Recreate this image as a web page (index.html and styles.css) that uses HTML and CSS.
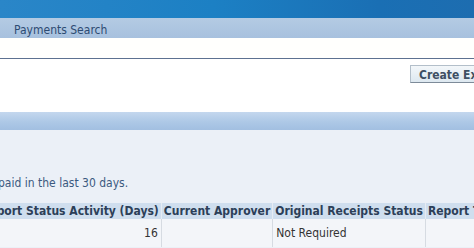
FILE: index.html
```html
<!DOCTYPE html>
<html>
<head>
<meta charset="utf-8">
<link rel="stylesheet" href="styles.css">
</head>
<body>
<div class="page">
  <div class="brand"></div>
  <div class="tabs"><span class="tab">Payments Search</span></div>
  <div class="strip"></div>
  <div class="actions">
    <button class="btn">Create Expense Report</button>
  </div>
  <div class="section-bar"></div>
  <div class="region">
    <p class="note">paid in the last 30 days.</p>
    <table class="grid">
      <thead>
        <tr>
          <th class="c1">Report Status Activity (Days)</th>
          <th class="c2">Current Approver</th>
          <th class="c3">Original Receipts Status</th>
          <th class="c4">Report Total</th>
        </tr>
      </thead>
      <tbody>
        <tr>
          <td class="num">16</td>
          <td></td>
          <td>Not Required</td>
          <td></td>
        </tr>
      </tbody>
    </table>
  </div>
</div>
</body>
</html>
```

FILE: styles.css
```css
html, body {
  margin: 0;
  padding: 0;
  background: #ffffff;
  overflow: hidden;
}
.page {
  width: 474px;
  height: 248px;
  overflow: hidden;
  font-family: "DejaVu Sans Condensed", "DejaVu Sans", sans-serif;
}
.brand {
  height: 18px;
  background: linear-gradient(90deg, #2a86c8 0%, #1c80c4 45%, #1a6fb4 80%, #1d6db0 100%);
}
.tabs {
  height: 20px;
  box-sizing: border-box;
  background: linear-gradient(180deg, #b4cbe3 0%, #a7c1de 100%);
  display: flex;
  align-items: center;
  padding: 3px 0 0 14px;
}
.tab {
  font-size: 12px;
  color: #2d4b72;
}
.strip {
  height: 20px;
  background: #fffffd;
  border-bottom: 1px solid #5d7190;
}
.actions {
  height: 53px;
  display: flex;
  align-items: flex-start;
  padding-top: 6px;
  box-sizing: border-box;
  padding-left: 410px;
}
.btn {
  flex: none;
  height: 18px;
  padding: 1px 8px 0;
  white-space: nowrap;
  font-family: "DejaVu Sans Condensed", "DejaVu Sans", sans-serif;
  font-weight: bold;
  font-size: 12px;
  color: #3e4f63;
  background: linear-gradient(180deg, #f3f7fa 0%, #dde8f0 100%);
  border: 1px solid #b3bfca;
  border-right-color: #7d8b99;
  border-bottom-color: #7d8b99;
  border-radius: 0;
}
.section-bar {
  height: 18px;
  background: linear-gradient(180deg, #c4d7ee 0%, #adc8e6 55%, #a2bfe1 100%);
}
.region {
  background: #ebf0f7;
  height: 118px;
  padding-top: 46px;
  box-sizing: border-box;
}
.note {
  margin: 0 0 13px -2px;
  font-size: 12px;
  color: #3b5a80;
}
.grid {
  border-collapse: collapse;
  margin-left: -21px;
  font-size: 12px;
  white-space: nowrap;
}
.grid th {
  background: #cfdeee;
  color: #2c3f58;
  font-weight: bold;
  text-align: left;
  height: 16px;
  padding: 0 2px;
  border-right: 1px solid #e6ecf3;
}
.grid td {
  background: #f3f5f9;
  color: #333333;
  height: 28px;
  padding: 0 3px;
  border-right: 1px solid #d6dbe2;
}
.grid td.num {
  text-align: right;
}
```
